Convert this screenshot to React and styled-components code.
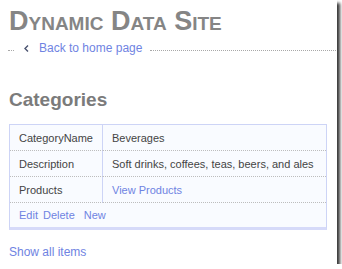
import React from "react";
import styled, { createGlobalStyle } from "styled-components";

const GlobalStyle = createGlobalStyle`
  html, body { margin: 0; padding: 0; background: #ffffff; }
  body { font-family: "Liberation Sans", Arial, sans-serif; }
`;

const Frame = styled.div`
  width: 337px;
  height: 264px;
  box-sizing: border-box;
  background: #ffffff;
  box-shadow: 3px 3px 3px rgba(0, 0, 0, 0.78);
  padding: 0 1px 0 9px;
  overflow: hidden;
`;

const Title = styled.h1`
  margin: 0;
  padding-top: 8px;
  font-family: "Liberation Sans", Arial, sans-serif;
  font-weight: bold;
  font-size: 27px;
  line-height: 27px;
  font-variant: small-caps;
  color: #858585;
  white-space: nowrap;
`;

const BackRow = styled.div`
  display: flex;
  align-items: flex-start;
  height: 14px;
  margin: 6px 0 0 -1px;
`;

const Dots = styled.span`
  display: block;
  margin-top: 9px;
  border-top: 1px dotted #a8a8a8;
  width: ${(p) => (p.$grow ? "auto" : `${p.$w}px`)};
  flex: ${(p) => (p.$grow ? "1" : "none")};
  margin-left: ${(p) => p.$ml || 0}px;
`;

const Chevron = styled.svg`
  display: block;
  flex: none;
  margin: 4px 0 0 10px;
`;

const Link = styled.a`
  color: #6f83e2;
  text-decoration: none;
  font-size: ${(p) => p.$size || 11}px;
  margin-left: ${(p) => p.$ml || 0}px;
  white-space: nowrap;
`;

const BackLink = styled(Link)`
  display: block;
  line-height: 14px;
`;

const Heading = styled.h2`
  margin: 35px 0 0;
  font-family: "Liberation Sans", Arial, sans-serif;
  font-weight: bold;
  font-size: 19px;
  line-height: 19px;
  color: #7b7b7b;
`;

const Table = styled.div`
  margin-top: 15px;
  width: 318px;
  box-sizing: border-box;
  background: #f9fbff;
  border: 1px solid #cdd4f6;
  border-bottom: 3px solid #d6daf9;
  font-size: 11px;
  color: #444444;
`;

const Row = styled.div`
  display: grid;
  grid-template-columns: 93px 1fr;
`;

const Cell = styled.div`
  box-sizing: border-box;
  height: 26px;
  padding: 1px 0 0 9px;
  line-height: 24px;
  border-bottom: 1px dotted #bdbdbd;
  border-right: ${(p) => (p.$label ? "1px solid #cdd4f6" : "none")};
  white-space: nowrap;
`;

const Footer = styled.div`
  display: flex;
  height: 24px;
  line-height: 24px;
  padding-left: 9px;
`;

const ShowAll = styled.div`
  margin-top: 14px;
  line-height: 14px;
`;

const rows = [
  { label: "CategoryName", value: "Beverages" },
  { label: "Description", value: "Soft drinks, coffees, teas, beers, and ales" },
  { label: "Products", value: "View Products", link: true },
];

export default function App() {
  return (
    <>
      <GlobalStyle />
      <Frame>
        <Title>Dynamic Data Site</Title>
        <BackRow>
          <Dots $w={6} />
          <Chevron width="5" height="7" viewBox="0 0 5 7">
            <polyline points="4,0.5 1,3.5 4,6.5" fill="none" stroke="#4a5370" strokeWidth="1.4" />
          </Chevron>
          <BackLink href="#" $size={12} $ml={10}>
            Back to home page
          </BackLink>
          <Dots $grow $ml={8} />
        </BackRow>
        <Heading>Categories</Heading>
        <Table>
          {rows.map((r) => (
            <Row key={r.label}>
              <Cell $label>{r.label}</Cell>
              <Cell>{r.link ? <Link href="#">{r.value}</Link> : r.value}</Cell>
            </Row>
          ))}
          <Footer>
            <Link href="#">Edit</Link>
            <Link href="#" $ml={5}>Delete</Link>
            <Link href="#" $ml={9}>New</Link>
          </Footer>
        </Table>
        <ShowAll>
          <Link href="#" $size={12}>Show all items</Link>
        </ShowAll>
      </Frame>
    </>
  );
}
